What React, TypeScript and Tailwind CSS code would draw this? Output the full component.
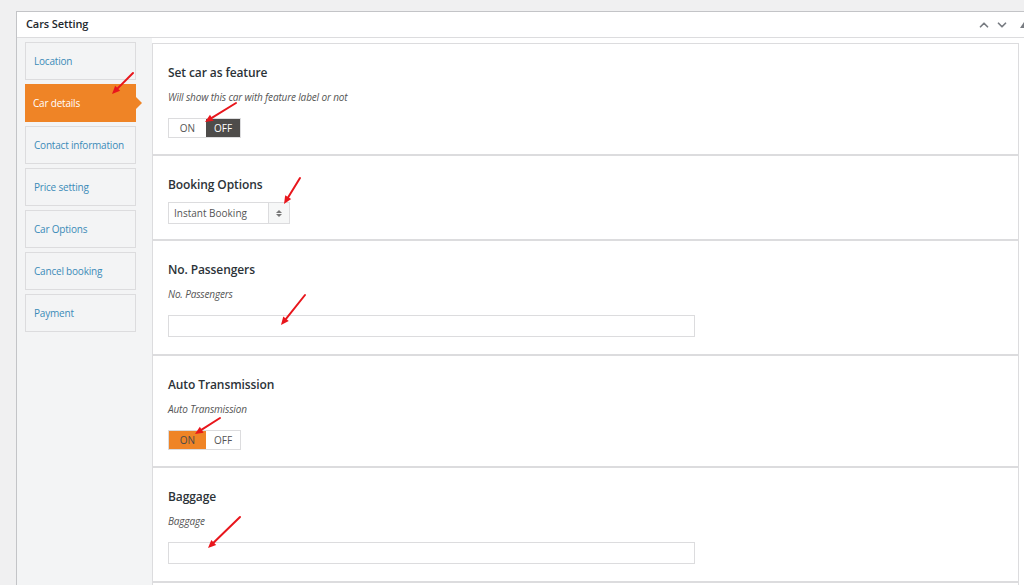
import React from 'react';

const font = { fontFamily: '"Open Sans", "Noto Sans", sans-serif' };

const tabs = ['Location', 'Car details', 'Contact information', 'Price setting', 'Car Options', 'Cancel booking', 'Payment'];

const Toggle: React.FC<{ on: boolean }> = ({ on }) => (
  <div className="flex h-[20px] w-[73px] border border-[#dcdcde] text-[10px] leading-none">
    <div className={`flex w-[37px] items-center justify-center ${on ? 'bg-[#ef8426] text-[#4a4a4a]' : 'bg-white text-[#555]'}`}>ON</div>
    <div className={`flex flex-1 items-center justify-center ${on ? 'bg-white text-[#555]' : 'bg-[#4e4c4a] text-white'}`}>OFF</div>
  </div>
);

const Section: React.FC<{ title: string; desc?: string; children: React.ReactNode; pb: string }> = ({ title, desc, children, pb }) => (
  <div className={`border-b-2 border-[#dcdcde] px-[15px] pt-[20px] ${pb}`}>
    <h3 className="h-[18px] text-[12px] font-semibold leading-[18px] tracking-[-0.1px] text-[#2c3338]">{title}</h3>
    {desc && <p className="mt-[8px] h-[14px] text-[10px] italic leading-[14px] tracking-[-0.15px] text-[#555]">{desc}</p>}
    <div className={desc ? 'mt-[14px]' : 'mt-[8px]'}>{children}</div>
  </div>
);

// red annotation arrows drawn over the screenshot
const arrows: [number, number, number, number][] = [
  [133, 73, 112, 94],
  [236, 103, 205, 122],
  [300, 178, 284, 204],
  [305, 295, 281, 325],
  [220, 418, 195, 434],
  [240, 517, 208, 548],
];

const Arrow: React.FC<{ a: [number, number, number, number] }> = ({ a }) => {
  const [x1, y1, x2, y2] = a;
  const ang = Math.atan2(y2 - y1, x2 - x1);
  const len = 8;
  const w = 3.5;
  const bx = x2 - Math.cos(ang) * len;
  const by = y2 - Math.sin(ang) * len;
  const px = -Math.sin(ang) * w;
  const py = Math.cos(ang) * w;
  return (
    <g>
      <line x1={x1} y1={y1} x2={bx} y2={by} stroke="#e8161c" strokeWidth="2" strokeLinecap="round" />
      <polygon points={`${x2},${y2} ${bx + px},${by + py} ${bx - px},${by - py}`} fill="#e8161c" />
    </g>
  );
};

export default function App() {
  return (
    <div className="relative h-[585px] w-[1024px] overflow-hidden bg-[#f0f0f1]" style={font}>
      <div className="ml-[16px] mt-[11px] w-[1020px] border border-[#c3c4c7] bg-white">
        {/* header */}
        <div className="flex h-[26px] items-center border-b border-[#dcdcde] pl-[9px]">
          <span className="text-[11px] font-semibold tracking-[-0.1px] text-[#23282d]">Cars Setting</span>
          <div className="ml-auto flex items-center gap-[4px] pr-[6px] text-[#787c82]">
            <svg width="14" height="14" viewBox="0 0 24 24" fill="none" stroke="currentColor" strokeWidth="3" strokeLinecap="round" strokeLinejoin="round"><path d="m6 15 6-6 6 6" /></svg>
            <svg width="14" height="14" viewBox="0 0 24 24" fill="none" stroke="currentColor" strokeWidth="3" strokeLinecap="round" strokeLinejoin="round"><path d="m6 9 6 6 6-6" /></svg>
            <svg width="10" height="8" viewBox="0 0 10 8" className="ml-[6px]"><path d="M5 1 9 7H1z" fill="currentColor" /></svg>
          </div>
        </div>
        {/* body */}
        <div className="flex">
          <div className="flex w-[135px] shrink-0 flex-col gap-[4px] bg-[#f3f4f5] pl-[8px] pt-[4px]">
            {tabs.map((t) => {
              const active = t === 'Car details';
              return (
                <div
                  key={t}
                  className={`relative flex h-[38px] w-[111px] items-center whitespace-nowrap px-[8px] text-[10px] tracking-[-0.2px] ${active ? 'bg-[#ef8426] text-white' : 'border border-[#dcdcde] bg-[#f3f4f5] text-[#3b8bb8]'}`}
                >
                  {t}
                  {active && <span className="absolute right-[-6px] top-1/2 h-0 w-0 -translate-y-1/2 border-y-[6px] border-l-[6px] border-y-transparent border-l-[#ef8426]" />}
                </div>
              );
            })}
            <div className="h-[260px]" />
          </div>
          <div className="mt-[5px] w-[867px] border border-[#dcdcde] bg-white">
            <Section title="Set car as feature" desc="Will show this car with feature label or not" pb="pb-[16px]">
              <Toggle on={false} />
            </Section>
            <Section title="Booking Options" pb="pb-[15px]">
              <div className="flex h-[22px] w-[122px] border border-[#dcdcde] text-[10px] text-[#555]">
                <div className="flex flex-1 items-center pl-[5px]">Instant Booking</div>
                <div className="flex w-[21px] flex-col items-center justify-center gap-[1px] border-l border-[#dcdcde] bg-[#f6f7f7]">
                  <span className="h-0 w-0 border-x-[3px] border-b-[3px] border-x-transparent border-b-[#777]" />
                  <span className="h-0 w-0 border-x-[3px] border-t-[3px] border-x-transparent border-t-[#777]" />
                </div>
              </div>
            </Section>
            <Section title="No. Passengers" desc="No. Passengers" pb="pb-[17px]">
              <div className="h-[22px] w-[527px] border border-[#dcdcde] bg-white" />
            </Section>
            <Section title="Auto Transmission" desc="Auto Transmission" pb="pb-[16px]">
              <Toggle on={true} />
            </Section>
            <Section title="Baggage" desc="Baggage" pb="pb-[17px]">
              <div className="h-[22px] w-[527px] border border-[#dcdcde] bg-white" />
            </Section>
            <div className="h-[20px]" />
          </div>
        </div>
      </div>
      <svg className="pointer-events-none absolute left-0 top-0" width="1024" height="585">
        {arrows.map((a, i) => (
          <Arrow key={i} a={a} />
        ))}
      </svg>
    </div>
  );
}
